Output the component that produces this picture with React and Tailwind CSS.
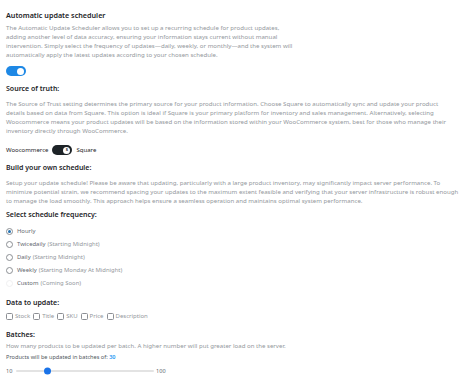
import React from 'react';

const font = { fontFamily: '"Noto Sans", "Open Sans", sans-serif' };

function Heading({ children, className = '' }) {
  return <h3 className={`h-[12px] text-[7px] font-semibold leading-[12px] text-[#1d2327] ${className}`}>{children}</h3>;
}

function Para({ lines, className = '' }) {
  return (
    <p className={`whitespace-nowrap text-[6.1px] leading-[9px] text-[#93979c] ${className}`}>
      {lines.map((l, i) => (
        <span key={i} className="block">
          {l}
        </span>
      ))}
    </p>
  );
}

function Radio({ label, note, checked, disabled }) {
  return (
    <label className="flex h-[9px] items-center gap-[4px] text-[5.9px] leading-[9px]">
      {disabled ? (
        <span className="h-[7px] w-[7px] rounded-full border border-[#f0f0f1]" />
      ) : (
        <span className="flex h-[7px] w-[7px] items-center justify-center rounded-full border border-[#8c8f94] bg-white">
          {checked && <span className="h-[3px] w-[3px] rounded-full bg-[#2271b1]" />}
        </span>
      )}
      <span className="text-[#646970]">{label}</span>
      {note && <span className="-ml-[2px] text-[#93979c]">{note}</span>}
    </label>
  );
}

export default function App() {
  const fields = ['Stock', 'Title', 'SKU', 'Price', 'Description'];
  const freqs = [
    { label: 'Hourly', checked: true },
    { label: 'Twicedaily', note: '(Starting Midnight)' },
    { label: 'Daily', note: '(Starting Midnight)' },
    { label: 'Weekly', note: '(Starting Monday At Midnight)' },
    { label: 'Custom', note: '(Coming Soon)', disabled: true },
  ];
  return (
    <div className="min-h-[384px] w-[474px] overflow-hidden bg-white px-[6px] pt-[9px]" style={font}>
      <h2 className="h-[12px] text-[7.2px] font-semibold leading-[12px] text-[#1d2327]">Automatic update scheduler</h2>
      <Para
        className="mt-[2px]"
        lines={[
          'The Automatic Update Scheduler allows you to set up a recurring schedule for product updates,',
          'adding another level of data accuracy, ensuring your information stays current without manual',
          'intervention. Simply select the frequency of updates—daily, weekly, or monthly—and the system will',
          'automatically apply the latest updates according to your chosen schedule.',
        ]}
      />

      <div className="mt-[7px] flex h-[10px] w-[20px] items-center justify-end rounded-full bg-[#1e88e5] px-[2px]">
        <span className="h-[7px] w-[7px] rounded-full bg-white" />
      </div>

      <Heading className="mt-[7px]">Source of truth:</Heading>
      <Para
        className="mt-[4px]"
        lines={[
          'The Source of Trust setting determines the primary source for your product information. Choose Square to automatically sync and update your product',
          'details based on data from Square. This option is ideal if Square is your primary platform for inventory and sales management. Alternatively, selecting',
          'Woocommerce means your product updates will be based on the information stored within your WooCommerce system, best for those who manage their',
          'inventory directly through WooCommerce.',
        ]}
      />

      <div className="mt-[10px] flex h-[10px] items-center gap-[4px] text-[6px] text-[#1d2327]">
        <span>Woocommerce</span>
        <div className="flex h-[10px] w-[20px] items-center justify-end rounded-full bg-[#1d2327] px-[2px]">
          <span className="flex h-[7px] w-[7px] items-center justify-center rounded-full bg-white text-[4px] font-bold leading-none text-[#1d2327]">
            S
          </span>
        </div>
        <span>Square</span>
      </div>

      <Heading className="mt-[7px]">Build your own schedule:</Heading>
      <Para
        className="mt-[4px]"
        lines={[
          'Setup your update schedule! Please be aware that updating, particularly with a large product inventory, may significantly impact server performance. To',
          'minimize potential strain, we recommend spacing your updates to the maximum extent feasible and verifying that your server infrastructure is robust enough',
          'to manage the load smoothly. This approach helps ensure a seamless operation and maintains optimal system performance.',
        ]}
      />

      <Heading className="mt-[4px]">Select schedule frequency:</Heading>
      <div className="mt-[6px] flex flex-col gap-[4px]">
        {freqs.map((f) => (
          <Radio key={f.label} {...f} />
        ))}
      </div>

      <Heading className="mt-[9px]">Data to update:</Heading>
      <div className="mt-[3px] flex h-[9px] items-center gap-[3px] text-[6px] leading-[9px] text-[#93979c]">
        {fields.map((f) => (
          <label key={f} className="flex items-center gap-[2px]">
            <span className="h-[7px] w-[7px] rounded-[1.5px] border border-[#8c8f94]" />
            <span>{f}</span>
          </label>
        ))}
      </div>

      <Heading className="mt-[8px]">Batches:</Heading>
      <Para lines={['How many products to be updated per batch. A higher number will put greater load on the server.']} />
      <p className="mt-[3px] text-[5.6px] leading-[9px] text-[#50575e]">
        Products will be updated in batches of: <span className="font-semibold text-[#2196f3]">30</span>
      </p>
      <div className="mt-[5px] flex h-[8px] items-center gap-[2px] text-[5.6px] text-[#646970]">
        <span className="w-[8px]">10</span>
        <div className="relative h-[2px] w-[138px] rounded-full bg-[#e3e3e3]">
          <span className="absolute top-1/2 left-[28px] h-[7px] w-[7px] -translate-y-1/2 rounded-full bg-[#1a73e8]" />
        </div>
        <span>100</span>
      </div>
    </div>
  );
}
